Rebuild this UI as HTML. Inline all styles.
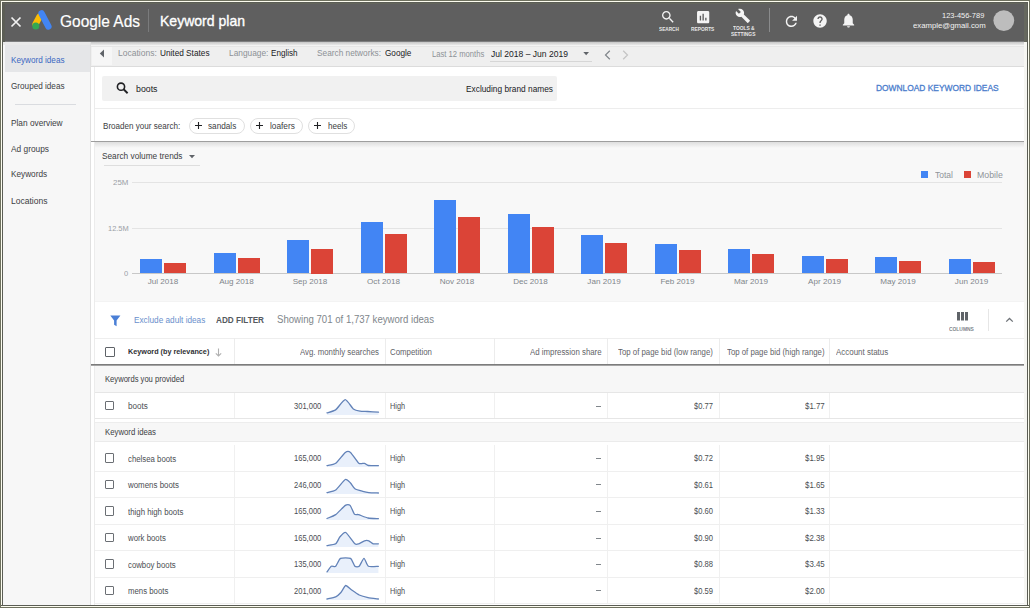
<!DOCTYPE html>
<html><head><meta charset="utf-8"><style>
html,body{margin:0;padding:0;width:1030px;height:608px;overflow:hidden;background:#fff;}
.t{position:absolute;font-family:"Liberation Sans", sans-serif;line-height:1;white-space:nowrap;transform-origin:0 0;}
.r{position:absolute;}
svg{position:absolute;}
</style></head><body>
<div class="r" style="left:0px;top:0px;width:1030px;height:608px;background:#6f715f;"></div>
<div class="r" style="left:1px;top:1px;width:1028px;height:606px;background:#fdfdf0;"></div>
<div class="r" style="left:2px;top:2px;width:1026px;height:604px;background:#5b5d55;"></div>
<div class="r" style="left:3px;top:3px;width:1024px;height:602px;background:#ffffff;"></div>
<div class="r" style="left:3px;top:3px;width:1024px;height:39px;background:#5f5f5f;"></div>
<div class="r" style="left:3px;top:41px;width:1024px;height:1px;background:#7d7e7f;"></div>
<div class="r" style="left:1024px;top:3px;width:3px;height:39px;background:#66685e;"></div>
<div class="r" style="left:3px;top:3px;width:2px;height:39px;background:#5c5e55;"></div>
<div class="r" style="left:3px;top:3px;width:1024px;height:1px;background:#64665c;"></div>
<div class="r" style="left:3px;top:42px;width:88px;height:563px;background:#f7f7f7;"></div>
<div class="r" style="left:90px;top:42px;width:1px;height:563px;background:#e3e3e3;"></div>
<div class="r" style="left:5px;top:45px;width:85px;height:27px;background:#e5e6e8;"></div>
<div class="r" style="left:3px;top:42px;width:88px;height:3px;background:#e9e9e9;"></div>
<div class="r" style="left:15px;top:104px;width:61px;height:1px;background:#dadce0;"></div>
<div class="r" style="left:91px;top:42px;width:933px;height:25px;background:#efefef;"></div>
<div class="r" style="left:91px;top:42px;width:933px;height:3px;background:transparent;background:linear-gradient(#c6c6c6,#e8e8e8)"></div>
<div class="r" style="left:91px;top:45px;width:933px;height:1px;background:#f3f3f3;"></div>
<div class="r" style="left:91px;top:46px;width:933px;height:1px;background:#e6e6e6;"></div>
<div class="r" style="left:91px;top:66px;width:933px;height:1px;background:#dcdcdc;"></div>
<div class="r" style="left:92px;top:47px;width:20px;height:18px;background:#f6f6f6;"></div>
<div class="r" style="left:1024px;top:42px;width:3px;height:563px;background:#f6f6f2;"></div>
<div class="r" style="left:91px;top:67px;width:933px;height:74px;background:#ffffff;"></div>
<div class="r" style="left:102px;top:75.5px;width:455px;height:25.5px;background:#f1f1f1;border-radius:2px"></div>
<div class="r" style="left:91px;top:108px;width:933px;height:1px;background:#ededed;"></div>
<div class="r" style="left:91px;top:141px;width:933px;height:161px;background:#f8f8f8;"></div>
<div class="r" style="left:91px;top:141px;width:933px;height:1px;background:#9e9e9e;"></div>
<div class="r" style="left:91px;top:142px;width:933px;height:6px;background:transparent;background:linear-gradient(#dedede,#f8f8f8)"></div>
<div class="r" style="left:91px;top:301px;width:933px;height:1px;background:#f3f3f3;"></div>
<svg style="left:10px;top:16px" width="12" height="12" viewBox="0 0 12 12"><path d="M1.5 1.5L10.5 10.5M10.5 1.5L1.5 10.5" stroke="#f1f1f1" stroke-width="1.7"/></svg>
<svg style="left:31px;top:10px" width="22" height="22" viewBox="0 0 22 22">
<path d="M4.6 14 L8.6 6.6" stroke="#fbbc04" stroke-width="6.4" stroke-linecap="round"/>
<path d="M10.6 3.4 L17.4 16.4" stroke="#4285f4" stroke-width="6.4" stroke-linecap="round"/>
<circle cx="4.8" cy="16" r="3.5" fill="#34a853"/>
</svg>
<div class="t" style="left:59.70px;top:12.61px;font-size:17px;color:#ffffff;font-weight:400;transform:scaleX(0.9101);-webkit-text-stroke:0.2px #fff;">Google Ads</div>
<div class="r" style="left:148px;top:9px;width:1px;height:23px;background:#7a7b7c;"></div>
<div class="t" style="left:160.40px;top:13.67px;font-size:14.8px;color:#ffffff;font-weight:400;transform:scaleX(0.9481);-webkit-text-stroke:0.35px #fff;">Keyword plan</div>
<svg style="left:660.2px;top:8.6px" width="16" height="16" viewBox="0 0 24 24"><path fill="#f4f4f4" d="M15.5 14h-.79l-.28-.27C15.41 12.59 16 11.11 16 9.5 16 5.91 13.09 3 9.5 3S3 5.91 3 9.5 5.91 16 9.5 16c1.610 0 3.09-.59 4.23-1.57l.27.28v.79l5 4.99L20.49 19l-4.99-5zm-6 0C7.01 14 5 11.990 5 9.5S7.01 5 9.5 5 14 7.01 14 9.5 11.99 14 9.5 14z"/></svg>
<div class="t" style="left:658.70px;top:27.31px;font-size:5.3px;color:#e8e8e8;font-weight:700;transform:scaleX(0.8849);">SEARCH</div>
<svg style="left:695.2px;top:8.6px" width="16.3" height="16.3" viewBox="0 0 24 24"><path fill="#f4f4f4" d="M19 3H5c-1.1 0-2 .9-2 2v14c0 1.1.9 2 2 2h14c1.1 0 2-.9 2-2V5c0-1.1-.9-2-2-2zM9 17H7v-7h2v7zm4 0h-2V7h2v10zm4 0h-2v-4h2v4z"/></svg>
<div class="t" style="left:691.35px;top:27.31px;font-size:5.3px;color:#e8e8e8;font-weight:700;transform:scaleX(0.9098);">REPORTS</div>
<svg style="left:735px;top:8px" width="15.6" height="15.6" viewBox="0 0 24 24"><path fill="#f4f4f4" d="M22.7 19l-9.1-9.1c.9-2.3.4-5-1.5-6.9-2-2-5-2.4-7.4-1.3L9 6 6 9 1.6 4.7C.4 7.1.9 10.1 2.9 12.1c1.9 1.9 4.6 2.4 6.9 1.5l9.1 9.1c.4.4 1 .4 1.4 0l2.3-2.3c.5-.4.5-1.1.1-1.4z"/></svg>
<div class="t" style="left:732.70px;top:26.11px;font-size:5.3px;color:#e8e8e8;font-weight:700;transform:scaleX(0.9210);">TOOLS &amp;</div>
<div class="t" style="left:731.00px;top:32.31px;font-size:5.3px;color:#e8e8e8;font-weight:700;transform:scaleX(0.9208);">SETTINGS</div>
<div class="r" style="left:769px;top:8px;width:1px;height:24px;background:#8a8b8c;"></div>
<svg style="left:783px;top:12.5px" width="16.8" height="16.8" viewBox="0 0 24 24"><path fill="#f4f4f4" d="M17.65 6.35C16.2 4.9 14.21 4 12 4c-4.42 0-7.99 3.58-7.99 8s3.57 8 7.99 8c3.73 0 6.84-2.55 7.730-6h-2.08c-.82 2.33-3.04 4-5.65 4-3.31 0-6-2.69-6-6s2.69-6 6-6c1.66 0 3.14.69 4.22 1.78L13 11h7V4l-2.35 2.35z"/></svg>
<svg style="left:811.7px;top:12.9px" width="16.1" height="16.1" viewBox="0 0 24 24"><path fill="#f4f4f4" d="M12 2C6.48 2 2 6.48 2 12s4.48 10 10 10 10-4.48 10-10S17.52 2 12 2zm1 17h-2v-2h2v2zm2.07-7.75l-.9.92C13.45 12.9 13 13.5 13 15h-2v-.5c0-1.1.45-2.1 1.17-2.83l1.24-1.26c.37-.36.59-.86.59-1.41 0-1.1-.9-2-2-2s-2 .9-2 2H8c0-2.21 1.79-4 4-4s4 1.79 4 4c0 .88-.36 1.68-.93 2.25z"/></svg>
<svg style="left:839.7px;top:12.4px" width="17" height="17" viewBox="0 0 24 24"><path fill="#f4f4f4" d="M12 22c1.1 0 2-.9 2-2h-4c0 1.1.89 2 2 2zm6-6v-5c0-3.07-1.64-5.64-4.5-6.32V4c0-.83-.67-1.5-1.5-1.5s-1.5.67-1.5 1.5v.68C7.63 5.36 6 7.92 6 11v5l-2 2v1h16v-1l-2-2z"/></svg>
<div class="t" style="left:941.60px;top:12.00px;font-size:7.8px;color:#f2f2f2;font-weight:400;transform:scaleX(0.9563);">123-456-789</div>
<div class="t" style="left:912.60px;top:22.03px;font-size:8.0px;color:#f2f2f2;font-weight:400;transform:scaleX(0.9704);">example@gmail.com</div>
<svg style="left:993px;top:10px" width="22" height="22" viewBox="0 0 22 22"><circle cx="10.8" cy="10.6" r="10.4" fill="#bdbdbd"/></svg>
<div class="t" style="left:10.90px;top:55.55px;font-size:8.8px;color:#3a67c2;font-weight:400;transform:scaleX(0.9272);">Keyword ideas</div>
<div class="t" style="left:10.90px;top:81.85px;font-size:8.8px;color:#3c4043;font-weight:400;transform:scaleX(0.9269);">Grouped ideas</div>
<div class="t" style="left:10.80px;top:118.65px;font-size:8.8px;color:#3c4043;font-weight:400;transform:scaleX(0.9422);">Plan overview</div>
<div class="t" style="left:10.80px;top:144.55px;font-size:8.8px;color:#3c4043;font-weight:400;transform:scaleX(0.9474);">Ad groups</div>
<div class="t" style="left:10.80px;top:170.15px;font-size:8.8px;color:#3c4043;font-weight:400;transform:scaleX(0.9346);">Keywords</div>
<div class="t" style="left:10.80px;top:196.55px;font-size:8.8px;color:#3c4043;font-weight:400;transform:scaleX(0.9689);">Locations</div>
<svg style="left:99px;top:48.5px" width="6" height="9" viewBox="0 0 6 9"><path d="M5 0.5 L5 8.5 L0.8 4.5 Z" fill="#5f6368"/></svg>
<div class="t" style="left:117.80px;top:49.48px;font-size:9px;color:#8d9196;font-weight:400;transform:scaleX(0.9456);">Locations:</div>
<div class="t" style="left:159.50px;top:49.48px;font-size:9px;color:#202124;font-weight:400;transform:scaleX(0.9161);">United States</div>
<div class="t" style="left:228.80px;top:49.48px;font-size:9px;color:#8d9196;font-weight:400;transform:scaleX(0.9260);">Language:</div>
<div class="t" style="left:270.80px;top:49.48px;font-size:9px;color:#202124;font-weight:400;transform:scaleX(0.9007);">English</div>
<div class="t" style="left:317.20px;top:49.48px;font-size:9px;color:#8d9196;font-weight:400;transform:scaleX(0.9204);">Search networks:</div>
<div class="t" style="left:384.80px;top:49.48px;font-size:9px;color:#202124;font-weight:400;transform:scaleX(0.9094);">Google</div>
<div class="t" style="left:431.80px;top:49.82px;font-size:8.6px;color:#8d9196;font-weight:400;transform:scaleX(0.8900);">Last 12 months</div>
<div class="t" style="left:490.50px;top:49.14px;font-size:9.4px;color:#202124;font-weight:400;transform:scaleX(0.9117);">Jul 2018 – Jun 2019</div>
<svg style="left:582.5px;top:52px" width="7" height="4" viewBox="0 0 7 4"><path d="M0.3 0 L6 0 L3.15 3.2 Z" fill="#5f6368"/></svg>
<div class="r" style="left:490px;top:61px;width:102px;height:1px;background:#d6d6d6;"></div>
<svg style="left:604px;top:49.5px" width="7" height="10" viewBox="0 0 7 10"><path d="M5.8 0.8 L1.5 5 L5.8 9.2" stroke="#80868b" stroke-width="1.2" fill="none"/></svg>
<svg style="left:622px;top:49.5px" width="7" height="10" viewBox="0 0 7 10"><path d="M1.2 0.8 L5.5 5 L1.2 9.2" stroke="#c4c4c4" stroke-width="1.2" fill="none"/></svg>
<svg style="left:112px;top:80px" width="20" height="16" viewBox="0 0 20 16"><circle cx="9" cy="6.7" r="3.6" fill="none" stroke="#202124" stroke-width="1.6"/><path d="M11.6 9.3L15.6 13.2" stroke="#202124" stroke-width="1.9"/></svg>
<div class="t" style="left:135.70px;top:85.21px;font-size:9.2px;color:#202124;font-weight:400;transform:scaleX(0.9562);">boots</div>
<div class="t" style="left:465.80px;top:84.58px;font-size:9px;color:#202124;font-weight:400;transform:scaleX(0.9249);">Excluding brand names</div>
<div class="t" style="left:875.70px;top:83.88px;font-size:9px;color:#4a7ccc;font-weight:400;transform:scaleX(0.9322);-webkit-text-stroke:0.3px #4a7ccc;">DOWNLOAD KEYWORD IDEAS</div>
<div class="t" style="left:102.50px;top:121.77px;font-size:8.9px;color:#3c4043;font-weight:400;transform:scaleX(0.9097);">Broaden your search:</div>
<div class="r" style="left:189px;top:117.5px;width:54px;height:14.5px;border:1px solid #e0e0e0;border-radius:9px;background:#fff"></div>
<svg style="left:194.5px;top:122px" width="7" height="7" viewBox="0 0 7 7"><path d="M3.5 0V7M0 3.5H7" stroke="#202124" stroke-width="1.1"/></svg>
<div class="t" style="left:208.00px;top:121.58px;font-size:9px;color:#3c4043;font-weight:400;transform:scaleX(0.9120);">sandals</div>
<div class="r" style="left:250px;top:117.5px;width:51px;height:14.5px;border:1px solid #e0e0e0;border-radius:9px;background:#fff"></div>
<svg style="left:255.7px;top:122px" width="7" height="7" viewBox="0 0 7 7"><path d="M3.5 0V7M0 3.5H7" stroke="#202124" stroke-width="1.1"/></svg>
<div class="t" style="left:269.90px;top:121.58px;font-size:9px;color:#3c4043;font-weight:400;transform:scaleX(0.9217);">loafers</div>
<div class="r" style="left:308px;top:117.5px;width:45px;height:14.5px;border:1px solid #e0e0e0;border-radius:9px;background:#fff"></div>
<svg style="left:314.0px;top:122px" width="7" height="7" viewBox="0 0 7 7"><path d="M3.5 0V7M0 3.5H7" stroke="#202124" stroke-width="1.1"/></svg>
<div class="t" style="left:327.60px;top:121.58px;font-size:9px;color:#3c4043;font-weight:400;transform:scaleX(0.9017);">heels</div>
<div class="t" style="left:102.40px;top:151.67px;font-size:8.9px;color:#3c4043;font-weight:400;transform:scaleX(0.9325);">Search volume trends</div>
<svg style="left:188.5px;top:154.5px" width="6" height="4" viewBox="0 0 6 4"><path d="M0 0 L6 0 L3 3.2 Z" fill="#5f6368"/></svg>
<div class="r" style="left:104px;top:165px;width:96px;height:1px;background:#dedede;"></div>
<div class="t" style="left:112.90px;top:179.03px;font-size:8px;color:#9aa0a6;font-weight:400;transform:scaleX(0.9896);">25M</div>
<div class="t" style="left:107.60px;top:224.73px;font-size:8px;color:#9aa0a6;font-weight:400;transform:scaleX(0.9310);">12.5M</div>
<div class="t" style="left:124.10px;top:269.73px;font-size:8px;color:#9aa0a6;font-weight:400;transform:scaleX(0.9432);">0</div>
<div class="r" style="left:132px;top:182px;width:870px;height:1px;background:#e4e4e4;"></div>
<div class="r" style="left:132px;top:228px;width:870px;height:1px;background:#e4e4e4;"></div>
<div class="r" style="left:132px;top:273px;width:870px;height:1px;background:#c8c8c8;"></div>
<div class="r" style="left:140.00px;top:258.6px;width:22px;height:14.9px;background:#4285f4"></div>
<div class="r" style="left:164.00px;top:262.7px;width:22px;height:10.8px;background:#db4437"></div>
<div class="t" style="left:147.70px;top:277.84px;font-size:8.1px;color:#80868b;font-weight:400;">Jul 2018</div>
<div class="r" style="left:213.50px;top:252.6px;width:22px;height:20.9px;background:#4285f4"></div>
<div class="r" style="left:237.50px;top:257.9px;width:22px;height:15.6px;background:#db4437"></div>
<div class="t" style="left:219.17px;top:277.84px;font-size:8.1px;color:#80868b;font-weight:400;">Aug 2018</div>
<div class="r" style="left:287.00px;top:240.2px;width:22px;height:33.3px;background:#4285f4"></div>
<div class="r" style="left:311.00px;top:248.5px;width:22px;height:25.0px;background:#db4437"></div>
<div class="t" style="left:292.67px;top:277.84px;font-size:8.1px;color:#80868b;font-weight:400;">Sep 2018</div>
<div class="r" style="left:360.50px;top:221.8px;width:22px;height:51.7px;background:#4285f4"></div>
<div class="r" style="left:384.50px;top:234.2px;width:22px;height:39.3px;background:#db4437"></div>
<div class="t" style="left:367.07px;top:277.84px;font-size:8.1px;color:#80868b;font-weight:400;">Oct 2018</div>
<div class="r" style="left:434.00px;top:199.9px;width:22px;height:73.6px;background:#4285f4"></div>
<div class="r" style="left:458.00px;top:216.7px;width:22px;height:56.8px;background:#db4437"></div>
<div class="t" style="left:439.67px;top:277.84px;font-size:8.1px;color:#80868b;font-weight:400;">Nov 2018</div>
<div class="r" style="left:507.50px;top:213.9px;width:22px;height:59.6px;background:#4285f4"></div>
<div class="r" style="left:531.50px;top:226.9px;width:22px;height:46.6px;background:#db4437"></div>
<div class="t" style="left:513.17px;top:277.84px;font-size:8.1px;color:#80868b;font-weight:400;">Dec 2018</div>
<div class="r" style="left:581.00px;top:234.5px;width:22px;height:39.0px;background:#4285f4"></div>
<div class="r" style="left:605.00px;top:242.9px;width:22px;height:30.6px;background:#db4437"></div>
<div class="t" style="left:587.34px;top:277.84px;font-size:8.1px;color:#80868b;font-weight:400;">Jan 2019</div>
<div class="r" style="left:654.50px;top:243.5px;width:22px;height:30.0px;background:#4285f4"></div>
<div class="r" style="left:678.50px;top:249.8px;width:22px;height:23.7px;background:#db4437"></div>
<div class="t" style="left:660.40px;top:277.84px;font-size:8.1px;color:#80868b;font-weight:400;">Feb 2019</div>
<div class="r" style="left:728.00px;top:248.7px;width:22px;height:24.8px;background:#4285f4"></div>
<div class="r" style="left:752.00px;top:253.9px;width:22px;height:19.6px;background:#db4437"></div>
<div class="t" style="left:733.90px;top:277.84px;font-size:8.1px;color:#80868b;font-weight:400;">Mar 2019</div>
<div class="r" style="left:801.50px;top:255.7px;width:22px;height:17.8px;background:#4285f4"></div>
<div class="r" style="left:825.50px;top:259.4px;width:22px;height:14.1px;background:#db4437"></div>
<div class="t" style="left:808.07px;top:277.84px;font-size:8.1px;color:#80868b;font-weight:400;">Apr 2019</div>
<div class="r" style="left:875.00px;top:257.2px;width:22px;height:16.3px;background:#4285f4"></div>
<div class="r" style="left:899.00px;top:260.9px;width:22px;height:12.6px;background:#db4437"></div>
<div class="t" style="left:880.23px;top:277.84px;font-size:8.1px;color:#80868b;font-weight:400;">May 2019</div>
<div class="r" style="left:948.50px;top:259.0px;width:22px;height:14.5px;background:#4285f4"></div>
<div class="r" style="left:972.50px;top:261.6px;width:22px;height:11.9px;background:#db4437"></div>
<div class="t" style="left:954.84px;top:277.84px;font-size:8.1px;color:#80868b;font-weight:400;">Jun 2019</div>
<div class="r" style="left:921px;top:171px;width:7px;height:7px;background:#4285f4;"></div>
<div class="t" style="left:934.60px;top:170.52px;font-size:8.6px;color:#8f9499;font-weight:400;transform:scaleX(0.9859);">Total</div>
<div class="r" style="left:964px;top:171px;width:7px;height:7px;background:#db4437;"></div>
<div class="t" style="left:977.10px;top:170.52px;font-size:8.6px;color:#8f9499;font-weight:400;transform:scaleX(1.0186);">Mobile</div>
<div class="r" style="left:91px;top:302px;width:933px;height:36px;background:#ffffff;"></div>
<svg style="left:110px;top:314.5px" width="11" height="12" viewBox="0 0 11 12"><path d="M0.3 0.5 L10.4 0.5 L6.6 5.6 L6.6 11.2 L4.1 9.8 L4.1 5.6 Z" fill="#4a7fd6"/></svg>
<div class="t" style="left:133.70px;top:315.95px;font-size:8.8px;color:#6a8fcc;font-weight:400;transform:scaleX(0.9345);">Exclude adult ideas</div>
<div class="t" style="left:215.80px;top:315.95px;font-size:8.8px;color:#55595e;font-weight:700;transform:scaleX(0.9295);">ADD FILTER</div>
<div class="t" style="left:277.00px;top:314.94px;font-size:10px;color:#80868b;font-weight:400;transform:scaleX(0.9605);">Showing 701 of 1,737 keyword ideas</div>
<svg style="left:957px;top:311.5px" width="11" height="9" viewBox="0 0 11 9"><rect x="0" y="0" width="3" height="8.5" fill="#5f6368"/><rect x="4" y="0" width="3" height="8.5" fill="#5f6368"/><rect x="8" y="0" width="3" height="8.5" fill="#5f6368"/></svg>
<div class="t" style="left:949.40px;top:326.71px;font-size:5.3px;color:#80868b;font-weight:700;transform:scaleX(0.9260);">COLUMNS</div>
<div class="r" style="left:988px;top:309px;width:1px;height:22px;background:#e6e6e6;"></div>
<svg style="left:1004.5px;top:317px" width="9" height="6" viewBox="0 0 9 6"><path d="M1.2 4.6 L4.5 1.5 L7.8 4.6" stroke="#6f7378" stroke-width="1.3" fill="none"/></svg>
<div class="r" style="left:91px;top:338px;width:933px;height:27px;background:#ffffff;"></div>
<div class="r" style="left:91px;top:337.5px;width:933px;height:1.0px;background:#eeeeee;"></div>
<div class="r" style="left:234px;top:338px;width:1px;height:26px;background:#ececec;"></div>
<div class="r" style="left:385px;top:338px;width:1px;height:26px;background:#ececec;"></div>
<div class="r" style="left:494px;top:338px;width:1px;height:26px;background:#ececec;"></div>
<div class="r" style="left:607px;top:338px;width:1px;height:26px;background:#ececec;"></div>
<div class="r" style="left:719px;top:338px;width:1px;height:26px;background:#ececec;"></div>
<div class="r" style="left:829px;top:338px;width:1px;height:26px;background:#ececec;"></div>
<div class="r" style="left:91px;top:364px;width:933px;height:1px;background:#7c7c7c;"></div>
<div class="r" style="left:91px;top:365px;width:933px;height:1px;background:#a4a4a4;"></div>
<div class="r" style="left:91px;top:366px;width:933px;height:1px;background:#e2e2e2;"></div>
<div class="r" style="left:104.5px;top:346.5px;width:8px;height:8px;border:1.6px solid #5f6368;border-radius:1px"></div>
<div class="t" style="left:128.00px;top:348.31px;font-size:7.9px;color:#2e3033;font-weight:700;transform:scaleX(0.9177);">Keyword (by relevance)</div>
<svg style="left:214.5px;top:348px" width="7" height="9" viewBox="0 0 7 9"><path d="M3.5 0.5V8M0.8 5.3L3.5 8L6.2 5.3" stroke="#b0b0b0" stroke-width="1.1" fill="none"/></svg>
<div class="t" style="left:299.60px;top:347.89px;font-size:8.4px;color:#5f6368;font-weight:400;transform:scaleX(0.9340);">Avg. monthly searches</div>
<div class="t" style="left:389.90px;top:347.89px;font-size:8.4px;color:#5f6368;font-weight:400;transform:scaleX(0.9373);">Competition</div>
<div class="t" style="left:529.80px;top:347.89px;font-size:8.4px;color:#5f6368;font-weight:400;transform:scaleX(0.9379);">Ad impression share</div>
<div class="t" style="left:617.90px;top:347.89px;font-size:8.4px;color:#5f6368;font-weight:400;transform:scaleX(0.9350);">Top of page bid (low range)</div>
<div class="t" style="left:726.70px;top:347.89px;font-size:8.4px;color:#5f6368;font-weight:400;transform:scaleX(0.9306);">Top of page bid (high range)</div>
<div class="t" style="left:835.50px;top:347.89px;font-size:8.4px;color:#5f6368;font-weight:400;transform:scaleX(0.9502);">Account status</div>
<div class="r" style="left:91px;top:366px;width:933px;height:26.5px;background:#f7f7f7;"></div>
<div class="r" style="left:91px;top:391.5px;width:933px;height:1.0px;background:#e6e6e6;"></div>
<div class="t" style="left:104.80px;top:375.66px;font-size:8.2px;color:#3c4043;font-weight:400;transform:scaleX(0.9306);">Keywords you provided</div>
<div class="r" style="left:91px;top:392.5px;width:933px;height:26.5px;background:#ffffff;"></div>
<div class="r" style="left:91px;top:418.0px;width:933px;height:1.0px;background:#efefef;"></div>
<div class="r" style="left:234px;top:392.5px;width:1px;height:25.5px;background:#f0f0f0;"></div>
<div class="r" style="left:385px;top:392.5px;width:1px;height:25.5px;background:#f0f0f0;"></div>
<div class="r" style="left:494px;top:392.5px;width:1px;height:25.5px;background:#f0f0f0;"></div>
<div class="r" style="left:607px;top:392.5px;width:1px;height:25.5px;background:#f0f0f0;"></div>
<div class="r" style="left:719px;top:392.5px;width:1px;height:25.5px;background:#f0f0f0;"></div>
<div class="r" style="left:829px;top:392.5px;width:1px;height:25.5px;background:#f0f0f0;"></div>
<div class="r" style="left:104.5px;top:400.7px;width:7.6px;height:7.6px;border:1.5px solid #6b6f74;border-radius:1px"></div>
<div class="t" style="left:127.80px;top:402.47px;font-size:8.3px;color:#4a4e52;font-weight:400;transform:scaleX(0.9755);">boots</div>
<div class="t" style="left:294.30px;top:402.56px;font-size:8.2px;color:#4a4e52;font-weight:400;transform:scaleX(0.9220);">301,000</div>
<svg style="left:320px;top:392.5px" width="70" height="26" viewBox="0 0 70 26"><path d="M7.00,19.90 C7.86,19.60 13.78,18.22 15.60,16.90 C17.42,15.58 23.43,6.80 25.20,6.70 C26.97,6.60 31.82,14.75 33.30,15.90 C34.78,17.05 38.57,17.94 40.00,18.20 C41.43,18.46 45.75,18.41 47.60,18.50 C49.45,18.59 57.41,19.04 58.50,19.10 L58.50,22 L7.00,22 Z" fill="#e9f0fb"/><path d="M7.00,19.90 C7.86,19.60 13.78,18.22 15.60,16.90 C17.42,15.58 23.43,6.80 25.20,6.70 C26.97,6.60 31.82,14.75 33.30,15.90 C34.78,17.05 38.57,17.94 40.00,18.20 C41.43,18.46 45.75,18.41 47.60,18.50 C49.45,18.59 57.41,19.04 58.50,19.10" fill="none" stroke="#6282b8" stroke-width="1.3" stroke-linejoin="round" stroke-linecap="round"/></svg>
<div class="t" style="left:390.00px;top:402.56px;font-size:8.2px;color:#4a4e52;font-weight:400;transform:scaleX(0.8905);">High</div>
<div class="r" style="left:596px;top:406px;width:5px;height:1px;background:#80868b;"></div>
<div class="t" style="left:693.60px;top:402.56px;font-size:8.2px;color:#4a4e52;font-weight:400;transform:scaleX(0.9268);">$0.77</div>
<div class="t" style="left:804.70px;top:402.56px;font-size:8.2px;color:#4a4e52;font-weight:400;transform:scaleX(0.9610);">$1.77</div>
<div class="r" style="left:91px;top:419px;width:933px;height:26.5px;background:#f7f7f7;"></div>
<div class="r" style="left:91px;top:418px;width:933px;height:1px;background:#e6e6e6;"></div>
<div class="r" style="left:91px;top:419px;width:933px;height:3px;background:#ffffff;"></div>
<div class="r" style="left:91px;top:422px;width:933px;height:1px;background:#ededed;"></div>
<div class="r" style="left:91px;top:440.5px;width:933px;height:1.0px;background:#ebebeb;"></div>
<div class="r" style="left:91px;top:441.5px;width:933px;height:3.0px;background:#ffffff;"></div>
<div class="r" style="left:91px;top:444.5px;width:933px;height:1.0px;background:#e6e6e6;"></div>
<div class="t" style="left:104.80px;top:428.66px;font-size:8.2px;color:#3c4043;font-weight:400;transform:scaleX(0.9497);">Keyword ideas</div>
<div class="r" style="left:91px;top:445px;width:933px;height:26.5px;background:#ffffff;"></div>
<div class="r" style="left:91px;top:470.5px;width:933px;height:1.0px;background:#efefef;"></div>
<div class="r" style="left:234px;top:445px;width:1px;height:25.5px;background:#f0f0f0;"></div>
<div class="r" style="left:385px;top:445px;width:1px;height:25.5px;background:#f0f0f0;"></div>
<div class="r" style="left:494px;top:445px;width:1px;height:25.5px;background:#f0f0f0;"></div>
<div class="r" style="left:607px;top:445px;width:1px;height:25.5px;background:#f0f0f0;"></div>
<div class="r" style="left:719px;top:445px;width:1px;height:25.5px;background:#f0f0f0;"></div>
<div class="r" style="left:829px;top:445px;width:1px;height:25.5px;background:#f0f0f0;"></div>
<div class="r" style="left:104.5px;top:453.2px;width:7.6px;height:7.6px;border:1.5px solid #6b6f74;border-radius:1px"></div>
<div class="t" style="left:127.80px;top:454.97px;font-size:8.3px;color:#4a4e52;font-weight:400;transform:scaleX(0.9413);">chelsea boots</div>
<div class="t" style="left:294.30px;top:455.06px;font-size:8.2px;color:#4a4e52;font-weight:400;transform:scaleX(0.9220);">165,000</div>
<svg style="left:320px;top:445px" width="70" height="26" viewBox="0 0 70 26"><path d="M7.00,20.70 C7.87,20.46 13.87,19.63 15.70,18.30 C17.53,16.97 23.82,8.49 25.30,7.40 C26.78,6.31 29.15,6.31 30.50,7.40 C31.85,8.49 37.40,17.21 38.80,18.30 C40.20,19.39 43.54,18.08 44.50,18.30 C45.46,18.52 47.01,20.26 48.40,20.50 C49.79,20.74 57.40,20.68 58.40,20.70 L58.40,22 L7.00,22 Z" fill="#e9f0fb"/><path d="M7.00,20.70 C7.87,20.46 13.87,19.63 15.70,18.30 C17.53,16.97 23.82,8.49 25.30,7.40 C26.78,6.31 29.15,6.31 30.50,7.40 C31.85,8.49 37.40,17.21 38.80,18.30 C40.20,19.39 43.54,18.08 44.50,18.30 C45.46,18.52 47.01,20.26 48.40,20.50 C49.79,20.74 57.40,20.68 58.40,20.70" fill="none" stroke="#6282b8" stroke-width="1.3" stroke-linejoin="round" stroke-linecap="round"/></svg>
<div class="t" style="left:390.00px;top:455.06px;font-size:8.2px;color:#4a4e52;font-weight:400;transform:scaleX(0.8905);">High</div>
<div class="r" style="left:596px;top:458px;width:5px;height:1px;background:#80868b;"></div>
<div class="t" style="left:693.60px;top:455.06px;font-size:8.2px;color:#4a4e52;font-weight:400;transform:scaleX(0.9268);">$0.72</div>
<div class="t" style="left:804.70px;top:455.06px;font-size:8.2px;color:#4a4e52;font-weight:400;transform:scaleX(0.9610);">$1.95</div>
<div class="r" style="left:91px;top:471.5px;width:933px;height:26.5px;background:#ffffff;"></div>
<div class="r" style="left:91px;top:497.0px;width:933px;height:1.0px;background:#efefef;"></div>
<div class="r" style="left:234px;top:471.5px;width:1px;height:25.5px;background:#f0f0f0;"></div>
<div class="r" style="left:385px;top:471.5px;width:1px;height:25.5px;background:#f0f0f0;"></div>
<div class="r" style="left:494px;top:471.5px;width:1px;height:25.5px;background:#f0f0f0;"></div>
<div class="r" style="left:607px;top:471.5px;width:1px;height:25.5px;background:#f0f0f0;"></div>
<div class="r" style="left:719px;top:471.5px;width:1px;height:25.5px;background:#f0f0f0;"></div>
<div class="r" style="left:829px;top:471.5px;width:1px;height:25.5px;background:#f0f0f0;"></div>
<div class="r" style="left:104.5px;top:479.7px;width:7.6px;height:7.6px;border:1.5px solid #6b6f74;border-radius:1px"></div>
<div class="t" style="left:127.80px;top:481.47px;font-size:8.3px;color:#4a4e52;font-weight:400;transform:scaleX(0.9533);">womens boots</div>
<div class="t" style="left:294.30px;top:481.56px;font-size:8.2px;color:#4a4e52;font-weight:400;transform:scaleX(0.9220);">246,000</div>
<svg style="left:320px;top:471.5px" width="70" height="26" viewBox="0 0 70 26"><path d="M7.00,20.60 C7.87,20.34 13.87,19.31 15.70,18.00 C17.53,16.69 23.82,8.20 25.30,7.50 C26.78,6.80 29.54,10.08 30.50,11.00 C31.46,11.92 33.68,15.87 34.90,16.70 C36.12,17.53 41.31,18.91 42.70,19.30 C44.09,19.69 47.23,20.43 48.80,20.60 C50.37,20.77 57.44,20.96 58.40,21.00 L58.40,22 L7.00,22 Z" fill="#e9f0fb"/><path d="M7.00,20.60 C7.87,20.34 13.87,19.31 15.70,18.00 C17.53,16.69 23.82,8.20 25.30,7.50 C26.78,6.80 29.54,10.08 30.50,11.00 C31.46,11.92 33.68,15.87 34.90,16.70 C36.12,17.53 41.31,18.91 42.70,19.30 C44.09,19.69 47.23,20.43 48.80,20.60 C50.37,20.77 57.44,20.96 58.40,21.00" fill="none" stroke="#6282b8" stroke-width="1.3" stroke-linejoin="round" stroke-linecap="round"/></svg>
<div class="t" style="left:390.00px;top:481.56px;font-size:8.2px;color:#4a4e52;font-weight:400;transform:scaleX(0.8905);">High</div>
<div class="r" style="left:596px;top:484px;width:5px;height:1px;background:#80868b;"></div>
<div class="t" style="left:693.60px;top:481.56px;font-size:8.2px;color:#4a4e52;font-weight:400;transform:scaleX(0.9268);">$0.61</div>
<div class="t" style="left:804.70px;top:481.56px;font-size:8.2px;color:#4a4e52;font-weight:400;transform:scaleX(0.9610);">$1.65</div>
<div class="r" style="left:91px;top:498px;width:933px;height:26.5px;background:#ffffff;"></div>
<div class="r" style="left:91px;top:523.5px;width:933px;height:1.0px;background:#efefef;"></div>
<div class="r" style="left:234px;top:498px;width:1px;height:25.5px;background:#f0f0f0;"></div>
<div class="r" style="left:385px;top:498px;width:1px;height:25.5px;background:#f0f0f0;"></div>
<div class="r" style="left:494px;top:498px;width:1px;height:25.5px;background:#f0f0f0;"></div>
<div class="r" style="left:607px;top:498px;width:1px;height:25.5px;background:#f0f0f0;"></div>
<div class="r" style="left:719px;top:498px;width:1px;height:25.5px;background:#f0f0f0;"></div>
<div class="r" style="left:829px;top:498px;width:1px;height:25.5px;background:#f0f0f0;"></div>
<div class="r" style="left:104.5px;top:506.2px;width:7.6px;height:7.6px;border:1.5px solid #6b6f74;border-radius:1px"></div>
<div class="t" style="left:127.80px;top:507.97px;font-size:8.3px;color:#4a4e52;font-weight:400;transform:scaleX(0.9438);">thigh high boots</div>
<div class="t" style="left:294.30px;top:508.06px;font-size:8.2px;color:#4a4e52;font-weight:400;transform:scaleX(0.9220);">165,000</div>
<svg style="left:320px;top:498px" width="70" height="26" viewBox="0 0 70 26"><path d="M7.00,20.50 C7.87,20.11 13.87,17.91 15.70,16.60 C17.53,15.29 23.86,8.32 25.30,7.40 C26.74,6.48 29.19,6.53 30.10,7.40 C31.01,8.27 33.57,15.18 34.40,16.10 C35.23,17.02 37.04,16.21 38.40,16.60 C39.76,16.99 46.00,19.59 48.00,20.00 C50.00,20.41 57.36,20.63 58.40,20.70 L58.40,22 L7.00,22 Z" fill="#e9f0fb"/><path d="M7.00,20.50 C7.87,20.11 13.87,17.91 15.70,16.60 C17.53,15.29 23.86,8.32 25.30,7.40 C26.74,6.48 29.19,6.53 30.10,7.40 C31.01,8.27 33.57,15.18 34.40,16.10 C35.23,17.02 37.04,16.21 38.40,16.60 C39.76,16.99 46.00,19.59 48.00,20.00 C50.00,20.41 57.36,20.63 58.40,20.70" fill="none" stroke="#6282b8" stroke-width="1.3" stroke-linejoin="round" stroke-linecap="round"/></svg>
<div class="t" style="left:390.00px;top:508.06px;font-size:8.2px;color:#4a4e52;font-weight:400;transform:scaleX(0.8905);">High</div>
<div class="r" style="left:596px;top:511px;width:5px;height:1px;background:#80868b;"></div>
<div class="t" style="left:693.60px;top:508.06px;font-size:8.2px;color:#4a4e52;font-weight:400;transform:scaleX(0.9268);">$0.60</div>
<div class="t" style="left:804.70px;top:508.06px;font-size:8.2px;color:#4a4e52;font-weight:400;transform:scaleX(0.9610);">$1.33</div>
<div class="r" style="left:91px;top:524.5px;width:933px;height:26.5px;background:#ffffff;"></div>
<div class="r" style="left:91px;top:550.0px;width:933px;height:1.0px;background:#efefef;"></div>
<div class="r" style="left:234px;top:524.5px;width:1px;height:25.5px;background:#f0f0f0;"></div>
<div class="r" style="left:385px;top:524.5px;width:1px;height:25.5px;background:#f0f0f0;"></div>
<div class="r" style="left:494px;top:524.5px;width:1px;height:25.5px;background:#f0f0f0;"></div>
<div class="r" style="left:607px;top:524.5px;width:1px;height:25.5px;background:#f0f0f0;"></div>
<div class="r" style="left:719px;top:524.5px;width:1px;height:25.5px;background:#f0f0f0;"></div>
<div class="r" style="left:829px;top:524.5px;width:1px;height:25.5px;background:#f0f0f0;"></div>
<div class="r" style="left:104.5px;top:532.7px;width:7.6px;height:7.6px;border:1.5px solid #6b6f74;border-radius:1px"></div>
<div class="t" style="left:127.80px;top:534.47px;font-size:8.3px;color:#4a4e52;font-weight:400;transform:scaleX(0.9421);">work boots</div>
<div class="t" style="left:294.30px;top:534.56px;font-size:8.2px;color:#4a4e52;font-weight:400;transform:scaleX(0.9220);">165,000</div>
<svg style="left:320px;top:524.5px" width="70" height="26" viewBox="0 0 70 26"><path d="M7.00,20.60 C7.87,20.42 14.40,19.68 15.70,18.80 C17.00,17.92 19.00,12.93 20.00,11.80 C21.00,10.67 24.21,6.80 25.70,7.50 C27.19,8.20 33.59,17.67 34.90,18.80 C36.21,19.93 37.84,19.10 38.80,18.80 C39.76,18.50 43.50,16.10 44.50,15.80 C45.50,15.50 47.93,15.50 48.80,15.80 C49.67,16.10 52.24,18.50 53.20,18.80 C54.16,19.10 57.88,18.80 58.40,18.80 L58.40,22 L7.00,22 Z" fill="#e9f0fb"/><path d="M7.00,20.60 C7.87,20.42 14.40,19.68 15.70,18.80 C17.00,17.92 19.00,12.93 20.00,11.80 C21.00,10.67 24.21,6.80 25.70,7.50 C27.19,8.20 33.59,17.67 34.90,18.80 C36.21,19.93 37.84,19.10 38.80,18.80 C39.76,18.50 43.50,16.10 44.50,15.80 C45.50,15.50 47.93,15.50 48.80,15.80 C49.67,16.10 52.24,18.50 53.20,18.80 C54.16,19.10 57.88,18.80 58.40,18.80" fill="none" stroke="#6282b8" stroke-width="1.3" stroke-linejoin="round" stroke-linecap="round"/></svg>
<div class="t" style="left:390.00px;top:534.56px;font-size:8.2px;color:#4a4e52;font-weight:400;transform:scaleX(0.8905);">High</div>
<div class="r" style="left:596px;top:538px;width:5px;height:1px;background:#80868b;"></div>
<div class="t" style="left:693.60px;top:534.56px;font-size:8.2px;color:#4a4e52;font-weight:400;transform:scaleX(0.9268);">$0.90</div>
<div class="t" style="left:804.70px;top:534.56px;font-size:8.2px;color:#4a4e52;font-weight:400;transform:scaleX(0.9610);">$2.38</div>
<div class="r" style="left:91px;top:551px;width:933px;height:26.5px;background:#ffffff;"></div>
<div class="r" style="left:91px;top:576.5px;width:933px;height:1.0px;background:#efefef;"></div>
<div class="r" style="left:234px;top:551px;width:1px;height:25.5px;background:#f0f0f0;"></div>
<div class="r" style="left:385px;top:551px;width:1px;height:25.5px;background:#f0f0f0;"></div>
<div class="r" style="left:494px;top:551px;width:1px;height:25.5px;background:#f0f0f0;"></div>
<div class="r" style="left:607px;top:551px;width:1px;height:25.5px;background:#f0f0f0;"></div>
<div class="r" style="left:719px;top:551px;width:1px;height:25.5px;background:#f0f0f0;"></div>
<div class="r" style="left:829px;top:551px;width:1px;height:25.5px;background:#f0f0f0;"></div>
<div class="r" style="left:104.5px;top:559.2px;width:7.6px;height:7.6px;border:1.5px solid #6b6f74;border-radius:1px"></div>
<div class="t" style="left:127.80px;top:560.97px;font-size:8.3px;color:#4a4e52;font-weight:400;transform:scaleX(0.9402);">cowboy boots</div>
<div class="t" style="left:294.30px;top:561.06px;font-size:8.2px;color:#4a4e52;font-weight:400;transform:scaleX(0.9220);">135,000</div>
<svg style="left:320px;top:551px" width="70" height="26" viewBox="0 0 70 26"><path d="M7.00,20.90 C7.43,20.34 10.43,15.86 11.30,15.30 C12.17,14.74 14.78,16.09 15.70,15.30 C16.62,14.51 19.02,8.19 20.50,7.40 C21.98,6.61 29.06,6.61 30.50,7.40 C31.94,8.19 34.03,14.51 34.90,15.30 C35.77,16.09 38.29,16.09 39.20,15.30 C40.11,14.51 43.08,7.40 44.00,7.40 C44.92,7.40 46.96,14.51 48.40,15.30 C49.84,16.09 57.40,15.30 58.40,15.30 L58.40,22 L7.00,22 Z" fill="#e9f0fb"/><path d="M7.00,20.90 C7.43,20.34 10.43,15.86 11.30,15.30 C12.17,14.74 14.78,16.09 15.70,15.30 C16.62,14.51 19.02,8.19 20.50,7.40 C21.98,6.61 29.06,6.61 30.50,7.40 C31.94,8.19 34.03,14.51 34.90,15.30 C35.77,16.09 38.29,16.09 39.20,15.30 C40.11,14.51 43.08,7.40 44.00,7.40 C44.92,7.40 46.96,14.51 48.40,15.30 C49.84,16.09 57.40,15.30 58.40,15.30" fill="none" stroke="#6282b8" stroke-width="1.3" stroke-linejoin="round" stroke-linecap="round"/></svg>
<div class="t" style="left:390.00px;top:561.06px;font-size:8.2px;color:#4a4e52;font-weight:400;transform:scaleX(0.8905);">High</div>
<div class="r" style="left:596px;top:564px;width:5px;height:1px;background:#80868b;"></div>
<div class="t" style="left:693.60px;top:561.06px;font-size:8.2px;color:#4a4e52;font-weight:400;transform:scaleX(0.9268);">$0.88</div>
<div class="t" style="left:804.70px;top:561.06px;font-size:8.2px;color:#4a4e52;font-weight:400;transform:scaleX(0.9610);">$3.45</div>
<div class="r" style="left:91px;top:577.5px;width:933px;height:26.5px;background:#ffffff;"></div>
<div class="r" style="left:91px;top:603.0px;width:933px;height:1.0px;background:#efefef;"></div>
<div class="r" style="left:234px;top:577.5px;width:1px;height:25.5px;background:#f0f0f0;"></div>
<div class="r" style="left:385px;top:577.5px;width:1px;height:25.5px;background:#f0f0f0;"></div>
<div class="r" style="left:494px;top:577.5px;width:1px;height:25.5px;background:#f0f0f0;"></div>
<div class="r" style="left:607px;top:577.5px;width:1px;height:25.5px;background:#f0f0f0;"></div>
<div class="r" style="left:719px;top:577.5px;width:1px;height:25.5px;background:#f0f0f0;"></div>
<div class="r" style="left:829px;top:577.5px;width:1px;height:25.5px;background:#f0f0f0;"></div>
<div class="r" style="left:104.5px;top:585.7px;width:7.6px;height:7.6px;border:1.5px solid #6b6f74;border-radius:1px"></div>
<div class="t" style="left:127.80px;top:587.47px;font-size:8.3px;color:#4a4e52;font-weight:400;transform:scaleX(0.9396);">mens boots</div>
<div class="t" style="left:294.30px;top:587.56px;font-size:8.2px;color:#4a4e52;font-weight:400;transform:scaleX(0.9220);">201,000</div>
<svg style="left:320px;top:577.5px" width="70" height="26" viewBox="0 0 70 26"><path d="M7.00,21.00 C7.87,20.78 14.31,19.45 15.70,18.80 C17.09,18.15 19.90,15.63 20.90,14.50 C21.90,13.37 24.65,7.77 25.70,7.50 C26.75,7.23 30.05,10.85 31.40,11.80 C32.75,12.75 37.54,16.22 39.20,17.00 C40.86,17.78 46.08,19.20 48.00,19.60 C49.92,20.00 57.36,20.86 58.40,21.00 L58.40,22 L7.00,22 Z" fill="#e9f0fb"/><path d="M7.00,21.00 C7.87,20.78 14.31,19.45 15.70,18.80 C17.09,18.15 19.90,15.63 20.90,14.50 C21.90,13.37 24.65,7.77 25.70,7.50 C26.75,7.23 30.05,10.85 31.40,11.80 C32.75,12.75 37.54,16.22 39.20,17.00 C40.86,17.78 46.08,19.20 48.00,19.60 C49.92,20.00 57.36,20.86 58.40,21.00" fill="none" stroke="#6282b8" stroke-width="1.3" stroke-linejoin="round" stroke-linecap="round"/></svg>
<div class="t" style="left:390.00px;top:587.56px;font-size:8.2px;color:#4a4e52;font-weight:400;transform:scaleX(0.8905);">High</div>
<div class="r" style="left:596px;top:590px;width:5px;height:1px;background:#80868b;"></div>
<div class="t" style="left:693.60px;top:587.56px;font-size:8.2px;color:#4a4e52;font-weight:400;transform:scaleX(0.9268);">$0.59</div>
<div class="t" style="left:804.70px;top:587.56px;font-size:8.2px;color:#4a4e52;font-weight:400;transform:scaleX(0.9610);">$2.00</div>
<div class="r" style="left:94px;top:67px;width:1px;height:538px;background:#ececec;"></div>
<div class="r" style="left:91px;top:67px;width:3px;height:538px;background:#ffffff;"></div>
<div class="r" style="left:90px;top:42px;width:1px;height:563px;background:#e0e0e0;"></div>
<div class="r" style="left:91px;top:364px;width:4px;height:1px;background:#7c7c7c;"></div>
<div class="r" style="left:91px;top:365px;width:4px;height:1px;background:#a4a4a4;"></div>
<div class="r" style="left:91px;top:141px;width:4px;height:1px;background:#9e9e9e;"></div>
<div class="r" style="left:0px;top:605px;width:1030px;height:3px;background:#6f715f;"></div>
<div class="r" style="left:1px;top:605px;width:1028px;height:1px;background:#5b5d55;"></div>
<div class="r" style="left:1px;top:606px;width:1028px;height:1px;background:#fdfdf0;"></div>
</body></html>
